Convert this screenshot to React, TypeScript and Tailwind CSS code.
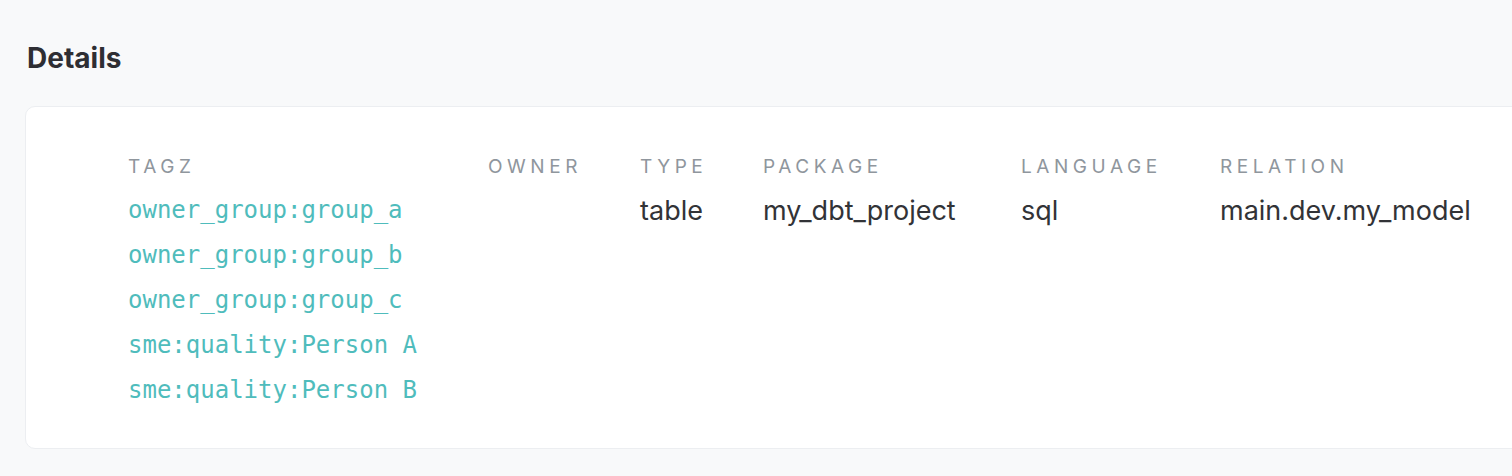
import React from "react";

const tags = [
  "owner_group:group_a",
  "owner_group:group_b",
  "owner_group:group_c",
  "sme:quality:Person A",
  "sme:quality:Person B",
];

const Label = ({ children }: { children: React.ReactNode }) => (
  <div className="text-[19px] leading-[24px] tracking-[0.24em] text-[#8f969d] uppercase">{children}</div>
);

const Value = ({ children }: { children: React.ReactNode }) => (
  <div className="text-[27px] leading-[45px] text-[#323337]">{children}</div>
);

export default function App() {
  return (
    <div
      className="w-[1512px] h-[476px] overflow-hidden bg-[#f8f9fa] pt-[40px] pl-[25px]"
      style={{ fontFamily: "Inter, 'Noto Sans', sans-serif" }}
    >
      <h2 className="pl-[2px] text-[28px] leading-[36px] font-bold text-[#2e2e33]">Details</h2>
      <div className="mt-[30px] w-[1540px] rounded-[10px] border border-[#eceef1] bg-white pt-[48px] pb-[35px] pl-[102px]">
        <div className="flex">
          <div className="w-[360px] flex flex-col">
            <Label>Tagz</Label>
            <div className="mt-[9px] flex flex-col">
              {tags.map((t) => (
                <div
                  key={t}
                  className="text-[24px] leading-[45px] text-[#4fbcbc]"
                  style={{ fontFamily: "'DejaVu Sans Mono', monospace" }}
                >
                  {t}
                </div>
              ))}
            </div>
          </div>
          <div className="w-[152px]">
            <Label>Owner</Label>
          </div>
          <div className="w-[123px]">
            <Label>Type</Label>
            <div className="mt-[9px]"><Value>table</Value></div>
          </div>
          <div className="w-[258px]">
            <Label>Package</Label>
            <div className="mt-[9px]"><Value>my_dbt_project</Value></div>
          </div>
          <div className="w-[199px]">
            <Label>Language</Label>
            <div className="mt-[9px]"><Value>sql</Value></div>
          </div>
          <div className="w-[300px]">
            <Label>Relation</Label>
            <div className="mt-[9px]"><Value>main.dev.my_model</Value></div>
          </div>
        </div>
      </div>
    </div>
  );
}
